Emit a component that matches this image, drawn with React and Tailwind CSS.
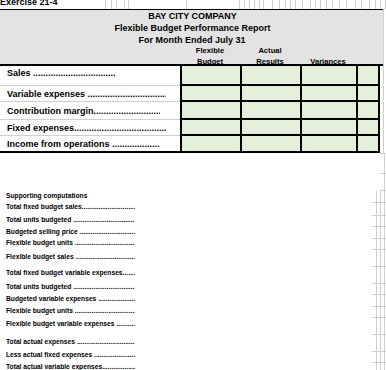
import React from "react";

const stripLines = [105, 111, 116, 124, 128, 186, 239, 244, 249, 254, 259, 263, 272, 279, 285, 290, 295, 302, 310, 315, 320, 326, 332, 339, 346, 355, 361, 369, 375, 380, 385];

const rows = [
  { label: "Sales ", w: "w-[108px]", h: "h-[20px]", pad: "items-start pt-[1px]", last: false },
  { label: "Variable expenses ", w: "w-[159px]", h: "h-[16px]", pad: "items-center", last: false },
  { label: "Contribution margin", w: "w-[153px]", h: "h-[18px]", pad: "items-center", last: false },
  { label: "Fixed expenses", w: "w-[159px]", h: "h-[16px]", pad: "items-center", last: false },
  { label: "Income from operations ", w: "w-[153px]", h: "h-[17px]", pad: "items-center", last: true },
];

const support = [
  { t: "Supporting computations", mt: "mt-[38px]", dots: false },
  { t: "Total fixed budget sales", mt: "mt-[1px]", dots: true },
  { t: "Total units budgeted ", mt: "mt-[3px]", dots: true },
  { t: "Budgeted selling price ", mt: "mt-[2px]", dots: true },
  { t: "Flexible budget units ", mt: "mt-[1px]", dots: true },
  { t: "Flexible budget sales ", mt: "mt-[4px]", dots: true },
  { t: "Total fixed budget variable expenses", mt: "mt-[6px]", dots: true },
  { t: "Total units budgeted ", mt: "mt-[4px]", dots: true },
  { t: "Budgeted variable expenses ", mt: "mt-[2px]", dots: true },
  { t: "Flexible budget units ", mt: "mt-[2px]", dots: true },
  { t: "Flexible budget variable expenses ", mt: "mt-[3px]", dots: true },
  { t: "Total actual expenses ", mt: "mt-[8px]", dots: true },
  { t: "Less actual fixed expenses ", mt: "mt-[3px]", dots: true },
  { t: "Total actual variable expenses", mt: "mt-[2px]", dots: true },
];

const ticksWide = [49, 62, 73, 85, 96, 113, 130, 141, 153, 164, 181, 198, 209];

export default function App() {
  const dots = ".".repeat(120);
  return (
    <div className="w-[386px] h-[370px] overflow-hidden bg-white text-black font-['Liberation_Sans',Arial,sans-serif]">
      {/* top strip */}
      <div className="flex h-[9px] overflow-hidden">
        <div className="w-[105px] shrink-0 overflow-hidden">
          <div className="-mt-[3px] text-[9px] leading-[10px] font-bold whitespace-nowrap">Exercise 21-4</div>
        </div>
        <svg width="281" height="9" className="block shrink-0">
          {stripLines.map((x) => (
            <line key={x} x1={x - 105 + 0.5} y1="0" x2={x - 105 + 0.5} y2="9" stroke="#cfcfcf" strokeWidth="1" />
          ))}
        </svg>
      </div>

      {/* header + table */}
      <div className="flex">
        <div className="w-[383px] shrink-0">
          <div className="h-[55px] overflow-hidden bg-[#e3e3e3] border-t border-black">
            <div className="text-center text-[9px] font-bold leading-[12px] pl-[2px]">BAY CITY COMPANY</div>
            <div className="text-center text-[9px] font-bold leading-[12px] pl-[2px]">Flexible Budget Performance Report</div>
            <div className="text-center text-[9px] font-bold leading-[12px] pl-[1px]">For Month Ended July 31</div>
            <div className="flex text-[7.6px] font-bold leading-[10px]">
              <div className="w-[180px]" />
              <div className="w-[60px] text-center">Flexible</div>
              <div className="w-[60px] text-center">Actual</div>
            </div>
            <div className="flex text-[7.6px] font-bold leading-[10px] mt-[1px]">
              <div className="w-[180px]" />
              <div className="w-[60px] text-center">Budget</div>
              <div className="w-[60px] text-center">Results</div>
              <div className="w-[56px] text-center">Variances</div>
            </div>
          </div>
          <div className="border-t-2 border-black">
            {rows.map((r, i) => (
              <div key={i} className={"flex " + r.h}>
                <div
                  className={
                    "w-[180px] shrink-0 flex pl-[7px] " +
                    r.pad +
                    (r.last ? " border-b-2 border-black" : " border-b border-[#cfcfcf]")
                  }
                >
                  <div className={r.w + " overflow-hidden whitespace-nowrap text-[9px] font-bold leading-[12px]"}>
                    {r.label}
                    {dots}
                  </div>
                </div>
                <div className="w-[60px] shrink-0 bg-[#e5f0db] border-l-2 border-b-2 border-black" />
                <div className="w-[60px] shrink-0 bg-[#e5f0db] border-l-2 border-b-2 border-black" />
                <div className="w-[56px] shrink-0 bg-[#e5f0db] border-l-2 border-b-2 border-black" />
                <div className="w-[24px] shrink-0 bg-[#e5f0db] border-l-2 border-r-2 border-b-2 border-black" />
              </div>
            ))}
          </div>
        </div>
        <div className="flex-1 border-l border-[#cfcfcf]" />
      </div>

      {/* supporting computations */}
      <div className="flex">
        <div className="flex-1 pl-[6px]">
          {support.map((s, i) => (
            <div
              key={i}
              className={s.mt + " h-[10px] w-[129px] overflow-hidden whitespace-nowrap text-[6.7px] font-bold leading-[10px]"}
            >
              {s.t}
              {s.dots ? dots : ""}
            </div>
          ))}
        </div>
        <svg width="14" height="218" className="block shrink-0">
          <line x1="12.5" y1="0" x2="12.5" y2="218" stroke="#cfcfcf" strokeWidth="1" />
          <line x1="4.5" y1="38" x2="4.5" y2="218" stroke="#cfcfcf" strokeWidth="1" />
          <line x1="8.5" y1="38" x2="8.5" y2="218" stroke="#cfcfcf" strokeWidth="1" />
          <line x1="8" y1="0.5" x2="14" y2="0.5" stroke="#cfcfcf" strokeWidth="1" />
          <line x1="8" y1="20.5" x2="14" y2="20.5" stroke="#cfcfcf" strokeWidth="1" />
          <line x1="8" y1="37.5" x2="14" y2="37.5" stroke="#cfcfcf" strokeWidth="1" />
          {ticksWide.map((y) => (
            <line key={y} x1="0" y1={y + 0.5} x2="14" y2={y + 0.5} stroke="#cfcfcf" strokeWidth="1" />
          ))}
        </svg>
      </div>
    </div>
  );
}
